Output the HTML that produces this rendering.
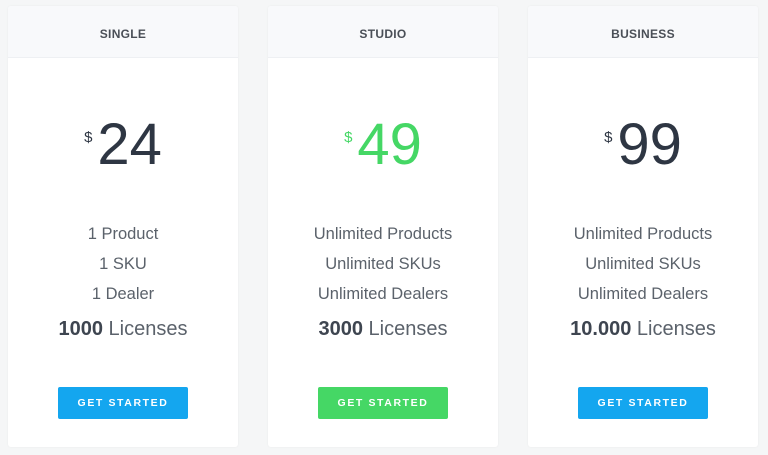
<!DOCTYPE html>
<html><head><style>
*{margin:0;padding:0;box-sizing:border-box}
body{width:768px;height:455px;background:#f5f6f7;font-family:"Liberation Sans",sans-serif;position:relative;overflow:hidden}
.card{position:absolute;top:6px;width:230px;height:441px;background:#fff;border-radius:3px;box-shadow:0 0 2px rgba(0,0,0,.05);text-align:center}
.hd{height:52px;background:#f8f9fb;border-bottom:1px solid #eef0f3;border-radius:3px 3px 0 0;font-size:12px;font-weight:bold;color:#4a4f57;line-height:56px;letter-spacing:.3px}
.price{position:absolute;top:104px;left:0;right:0;font-size:58px;color:#2e3643;line-height:70px}
.price span{font-size:15px;position:relative;top:-22px;margin-right:5px}
.f{position:absolute;left:0;right:0;font-size:16.5px;color:#5b626b}
.lic{position:absolute;top:312px;left:0;right:0;font-size:20px;color:#5b626b}
.lic b{color:#3e4550}
.btn{position:absolute;top:381px;left:50px;width:130px;height:32px;border-radius:2px;background:#14a6ef;color:#fff;font-size:10.5px;font-weight:bold;letter-spacing:1.6px;line-height:33px}
.g{background:#45d765}
</style></head><body>
<div class="card" style="left:8px"><div class="hd">SINGLE</div>
<div class="price"><span>$</span>24</div>
<div class="f" style="top:219px">1 Product</div><div class="f" style="top:249px">1 SKU</div><div class="f" style="top:279px">1 Dealer</div>
<div class="lic"><b>1000</b> Licenses</div><div class="btn">GET STARTED</div></div>
<div class="card" style="left:268px"><div class="hd">STUDIO</div>
<div class="price" style="color:#45d765"><span>$</span>49</div>
<div class="f" style="top:219px">Unlimited Products</div><div class="f" style="top:249px">Unlimited SKUs</div><div class="f" style="top:279px">Unlimited Dealers</div>
<div class="lic"><b>3000</b> Licenses</div><div class="btn g">GET STARTED</div></div>
<div class="card" style="left:528px"><div class="hd">BUSINESS</div>
<div class="price"><span>$</span>99</div>
<div class="f" style="top:219px">Unlimited Products</div><div class="f" style="top:249px">Unlimited SKUs</div><div class="f" style="top:279px">Unlimited Dealers</div>
<div class="lic"><b>10.000</b> Licenses</div><div class="btn">GET STARTED</div></div>
</body></html>
